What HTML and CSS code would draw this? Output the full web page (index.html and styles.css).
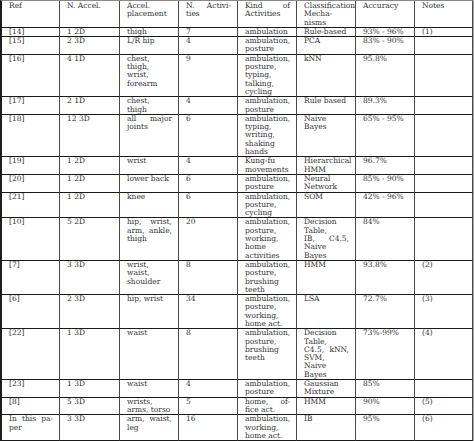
FILE: index.html
```html
<!DOCTYPE html>
<html>
<head>
<meta charset="utf-8">
<link rel="stylesheet" href="styles.css">
</head>
<body>
<table class="tbl">
<colgroup>
<col class="c-a"><col class="c-b"><col class="c-m"><col class="c-m"><col class="c-m"><col class="c-m"><col class="c-m"><col class="c-a">
</colgroup>
<thead>
<tr class="hd">
<th>Ref</th>
<th>N. Accel.</th>
<th>Accel.<br>placement</th>
<th><span class="j">N. Activi-</span>ties</th>
<th><span class="j">Kind of</span>Activities</th>
<th>Classification<br>Mecha-<br>nisms</th>
<th>Accuracy</th>
<th>Notes</th>
</tr>
</thead>
<tbody>
<tr><td>[14]</td><td>1 2D</td><td>thigh</td><td>7</td><td>ambulation</td><td>Rule-based</td><td>93% - 96%</td><td>(1)</td></tr>
<tr><td>[15]</td><td>2 3D</td><td>L/R hip</td><td>4</td><td>ambulation,<br>posture</td><td>PCA</td><td>83% - 90%</td><td></td></tr>
<tr><td>[16]</td><td>4 1D</td><td>chest,<br>thigh,<br>wrist,<br>forearm</td><td>9</td><td>ambulation,<br>posture,<br>typing,<br>talking,<br>cycling</td><td>kNN</td><td>95.8%</td><td></td></tr>
<tr><td>[17]</td><td>2 1D</td><td>chest,<br>thigh</td><td>4</td><td>ambulation,<br>posture</td><td>Rule based</td><td>89.3%</td><td></td></tr>
<tr><td>[18]</td><td>12 3D</td><td><span class="j">all major</span>joints</td><td>6</td><td>ambulation,<br>typing,<br>writing,<br>shaking<br>hands</td><td>Naive<br>Bayes</td><td>65% - 95%</td><td></td></tr>
<tr><td>[19]</td><td>1 2D</td><td>wrist</td><td>4</td><td>Kung-fu<br>movements</td><td>Hierarchical<br>HMM</td><td>96.7%</td><td></td></tr>
<tr><td>[20]</td><td>1 2D</td><td>lower back</td><td>6</td><td>ambulation,<br>posture</td><td>Neural<br>Network</td><td>85% - 90%</td><td></td></tr>
<tr><td>[21]</td><td>1 2D</td><td>knee</td><td>6</td><td>ambulation,<br>posture,<br>cycling</td><td>SOM</td><td>42% - 96%</td><td></td></tr>
<tr><td>[10]</td><td>5 2D</td><td><span class="j">hip, wrist,</span><span class="j">arm, ankle,</span>thigh</td><td>20</td><td>ambulation,<br>posture,<br>working,<br>home<br>activities</td><td>Decision<br>Table,<br><span class="j">IB, C4.5,</span>Naive<br>Bayes</td><td>84%</td><td></td></tr>
<tr><td>[7]</td><td>3 3D</td><td>wrist,<br>waist,<br>shoulder</td><td>8</td><td>ambulation,<br>posture,<br>brushing<br>teeth</td><td>HMM</td><td>93.8%</td><td>(2)</td></tr>
<tr><td>[6]</td><td>2 3D</td><td>hip, wrist</td><td>34</td><td>ambulation,<br>posture,<br>working,<br>home act.</td><td>LSA</td><td>72.7%</td><td>(3)</td></tr>
<tr><td>[22]</td><td>1 3D</td><td>waist</td><td>8</td><td>ambulation,<br>posture,<br>brushing<br>teeth</td><td>Decision<br>Table,<br><span class="j">C4.5, kNN,</span>SVM,<br>Naive<br>Bayes</td><td>73%-99%</td><td>(4)</td></tr>
<tr><td>[23]</td><td>1 3D</td><td>waist</td><td>4</td><td>ambulation,<br>posture</td><td>Gaussian<br>Mixture</td><td>85%</td><td></td></tr>
<tr><td>[8]</td><td>5 3D</td><td>wrists,<br>arms, torso</td><td>5</td><td><span class="j">home, of-</span>fice act.</td><td>HMM</td><td>90%</td><td>(5)</td></tr>
<tr><td><span class="j">In this pa-</span>per</td><td>3 3D</td><td><span class="j">arm, waist,</span>leg</td><td>16</td><td>ambulation,<br>working,<br>home act.</td><td>IB</td><td>95%</td><td>(6)</td></tr>
</tbody>
</table>
</body>
</html>
```
FILE: styles.css
```css
html, body {
  margin: 0;
  padding: 0;
  background: #fff;
}
body {
  width: 474px;
  height: 441px;
  overflow: hidden;
}
.tbl {
  border-collapse: separate;
  border-spacing: 0;
  table-layout: fixed;
  width: 474px;
  border-left: 2px solid #1e1e1e;
  border-top: 1px solid #8a8a8a;
  border-right: 1px solid #a8a8a8;
  font-family: "DejaVu Serif", serif;
  font-size: 7.5px;
  line-height: 8.3px;
  color: #333;
}
.c-a { width: 58px; }
.c-b { width: 60px; }
.c-m { width: 59px; }
.tbl th,
.tbl td {
  box-sizing: border-box;
  padding: 0 6px 0 7px;
  border-right: 1px solid #4a4a4a;
  border-bottom: 1px solid #1a1a1a;
  vertical-align: top;
  text-align: left;
  font-weight: normal;
  white-space: nowrap;
  overflow: visible;
}
.hd th {
  padding-top: 1px;
}
.j {
  display: block;
  white-space: normal;
  text-align: justify;
  text-align-last: justify;
}
```
